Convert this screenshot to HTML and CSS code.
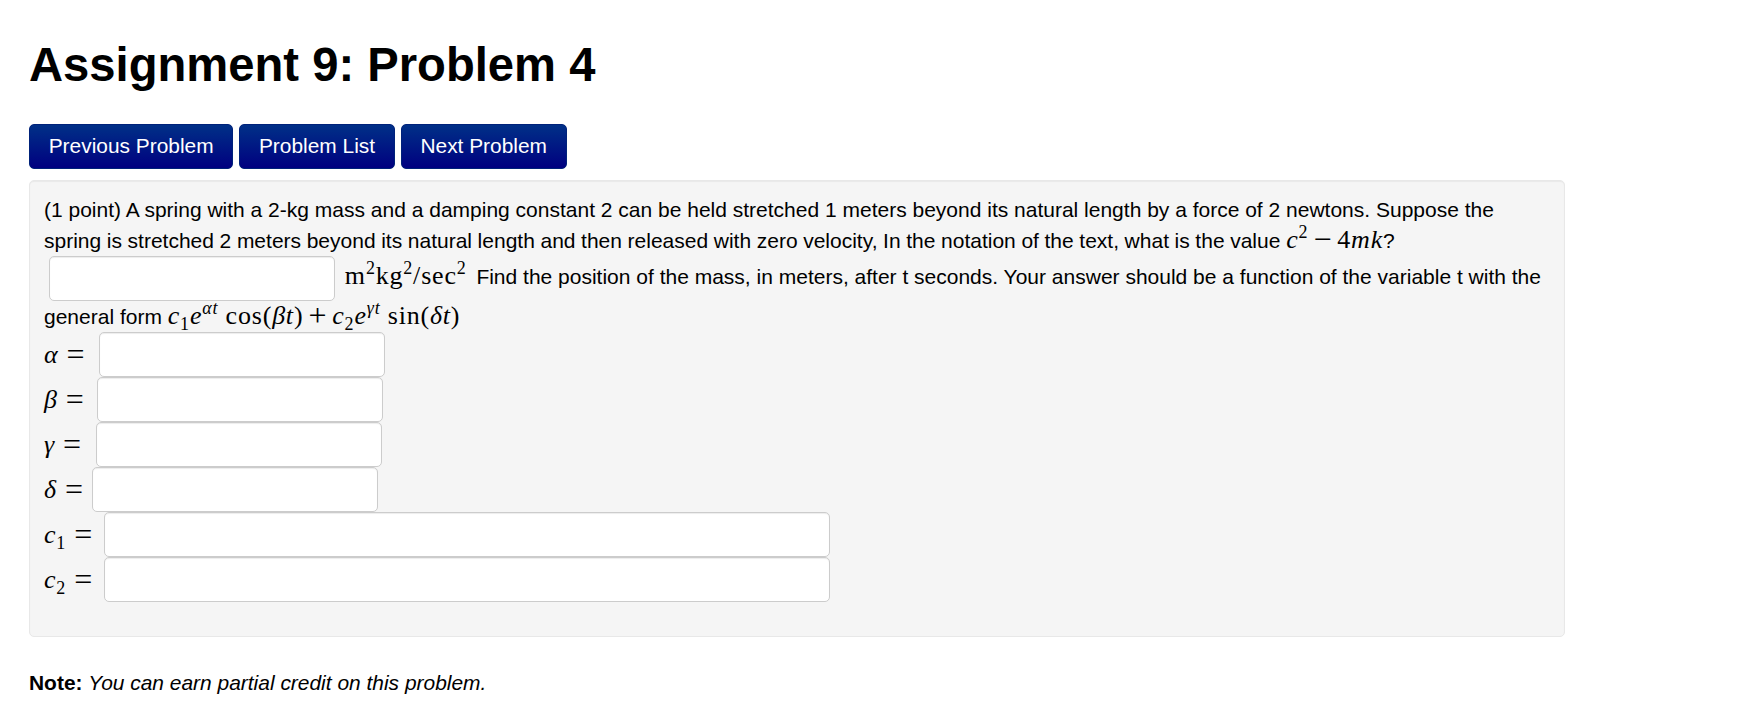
FILE: index.html
```html
<!DOCTYPE html>
<html lang="en">
<head>
    <meta charset="UTF-8">
    <title>Assignment 9: Problem 4</title>
    <link rel="stylesheet" href="styles.css">
</head>

<body>
<h1 class="title">Assignment 9: Problem 4</h1>

<div class="nav">
    <a class="btn" href="#">Previous Problem</a>
    <a class="btn" href="#">Problem List</a>
    <a class="btn" href="#">Next Problem</a>
</div>

<div class="well">
    <div class="problem">
        (1 point) A spring with a 2-kg mass and a damping constant 2 can be held stretched 1 meters beyond its natural length by a force of 2 newtons. Suppose the<br>
        <span class="tight">spring is stretched 2 meters beyond its natural length and then released with zero velocity, In the notation of the text, what is the value</span> <span class="math"><i>c</i><sup>2</sup><span class="op">&minus;</span>4<i>mk</i></span>?<br>
        <input class="answer answer-first" type="text">
        <span class="math units">m<sup>2</sup>kg<sup>2</sup>/sec<sup>2</sup></span>
        Find the position of the mass, in meters, after t seconds. Your answer should be a function of the variable t with the<br>
        general form <span class="math"><i>c</i><sub>1</sub><i>e</i><sup><i>&alpha;t</i></sup> cos(<i>&beta;t</i>)<span class="op">+</span><i>c</i><sub>2</sub><i>e</i><sup><i>&gamma;t</i></sup> sin(<i>&delta;t</i>)</span>
    </div>

    <div class="row">
        <span class="math label label-alpha"><i>&alpha;</i><span class="eq">=</span></span>
        <input class="answer" type="text">
    </div>
    <div class="row">
        <span class="math label label-beta"><i>&beta;</i><span class="eq">=</span></span>
        <input class="answer" type="text">
    </div>
    <div class="row">
        <span class="math label label-gamma"><i>&gamma;</i><span class="eq">=</span></span>
        <input class="answer" type="text">
    </div>
    <div class="row">
        <span class="math label label-delta"><i>&delta;</i><span class="eq">=</span></span>
        <input class="answer" type="text">
    </div>
    <div class="row">
        <span class="math label label-c"><i>c</i><sub>1</sub><span class="eq">=</span></span>
        <input class="answer answer-wide" type="text">
    </div>
    <div class="row">
        <span class="math label label-c"><i>c</i><sub>2</sub><span class="eq">=</span></span>
        <input class="answer answer-wide" type="text">
    </div>
</div>

<p class="note"><b>Note:</b> <i>You can earn partial credit on this problem.</i></p>
</body>
</html>
```

FILE: styles.css
```css
* {
    box-sizing: border-box;
}

body {
    margin: 0;
    padding: 0 29px;
    background-color: #fff;
    color: #000;
    font: 21px/31px "Liberation Sans", Arial, sans-serif;
}

.title {
    margin: 0;
    padding-top: 40px;
    height: 124px;
    font-size: 47.2px;
    line-height: 50px;
    font-weight: bold;
}

.nav {
    display: flex;
    gap: 6px;
}

.btn {
    display: block;
    height: 45px;
    padding: 0 18.7px;
    border: 1px solid #00227a;
    border-radius: 5px;
    background: linear-gradient(to bottom, #003087, #000080);
    color: #fff;
    font-size: 20.9px;
    line-height: 41px;
    text-decoration: none;
}

.well {
    width: 1536px;
    height: 457px;
    margin-top: 11px;
    padding: 13px 14px;
    border: 1px solid #e8e8e8;
    border-radius: 5px;
    background-color: #f5f5f5;
    box-shadow: inset 0 1px 1px rgba(0, 0, 0, .05);
}

.tight {
    word-spacing: -.22px;
}

.math {
    font-family: "Liberation Serif", "Times New Roman", serif;
    font-size: 26px;
    line-height: 1;
    letter-spacing: .8px;
    white-space: nowrap;
}

.math sup,
.math sub {
    font-size: 18px;
    line-height: 0;
}

.op {
    margin: 0 5px;
    font-size: 32px;
    line-height: 0;
    vertical-align: -2px;
}

.eq {
    margin-left: 8px;
    font-size: 32px;
    line-height: 0;
    vertical-align: -2px;
}

.units {
    margin-left: 4px;
    margin-right: 4px;
}

.answer {
    width: 286px;
    height: 45px;
    margin: 0;
    padding: 0 8px;
    border: 1px solid #ccc;
    border-radius: 5px;
    background-color: #fff;
    box-shadow: inset 0 1px 1px rgba(0, 0, 0, .075);
    vertical-align: middle;
}

.answer-first {
    margin-left: 5px;
}

.answer-wide {
    width: 726px;
}

.row {
    display: flex;
    align-items: center;
    height: 45px;
}

.label {
    flex-shrink: 0;
}

.label-alpha {
    width: 55px;
}

.label-beta {
    width: 53px;
}

.label-gamma {
    width: 52px;
}

.label-delta {
    width: 48px;
}

.label-c {
    width: 60px;
}

.note {
    margin: 30px 0 0;
    font-size: 20.95px;
}
```
